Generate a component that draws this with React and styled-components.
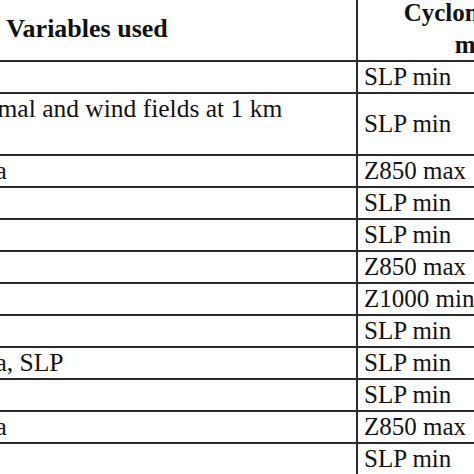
import styled, { createGlobalStyle } from 'styled-components';

const GlobalStyle = createGlobalStyle`
  html, body {
    margin: 0;
    padding: 0;
    background: #ffffff;
  }
`;

const Viewport = styled.div`
  width: 474px;
  height: 474px;
  overflow: hidden;
  background: #ffffff;
`;

const Table = styled.table`
  width: 819px;
  margin: -5px 0 0 -186px;
  border-collapse: collapse;
  table-layout: fixed;
  font-family: 'Liberation Serif', 'Times New Roman', serif;
  font-size: 25px;
  color: #111;
`;

const Col = styled.col`
  width: ${(p) => p.$width}px;
`;

const HeadCell = styled.th`
  padding: 0 0 0 ${(p) => (p.$first ? 4 : 0)}px;
  border: 2px solid #2a2a2a;
  border-left-width: ${(p) => (p.$first ? 0 : 2)}px;
  font-size: ${(p) => (p.$first ? 26 : 25)}px;
  font-weight: bold;
  line-height: 31.5px;
  text-align: center;
  vertical-align: middle;
  white-space: nowrap;
`;

const Cell = styled.td`
  padding: 0 6px 0 ${(p) => (p.$value ? 6 : 10)}px;
  border-top: 2px solid #2a2a2a;
  border-bottom: 2px solid #2a2a2a;
  border-left: ${(p) => (p.$value ? '2px solid #2a2a2a' : '0')};
  font-size: ${(p) => (p.$value ? 25 : 25.5)}px;
  line-height: 30px;
  vertical-align: ${(p) => (p.$value ? 'middle' : 'top')};
  white-space: nowrap;
`;

const rows = [
  { vars: 'SLP', method: 'SLP min' },
  {
    vars: (
      <>
        Vorticity, W, thermal and wind fields at 1 km
        <br />
        height
      </>
    ),
    method: 'SLP min',
  },
  { vars: 'Vorticity, 850 hPa', method: 'Z850 max' },
  { vars: 'SLP', method: 'SLP min' },
  { vars: 'SLP and wind', method: 'SLP min' },
  { vars: 'Geopotential', method: 'Z850 max' },
  { vars: 'Z1000 field', method: 'Z1000 min' },
  { vars: 'SLP', method: 'SLP min' },
  { vars: 'Vorticity, 850 hPa, SLP', method: 'SLP min' },
  { vars: 'SLP', method: 'SLP min' },
  { vars: 'Vorticity, 700 hPa', method: 'Z850 max' },
  { vars: 'SLP', method: 'SLP min' },
];

const App = () => {
  return (
    <Viewport>
      <GlobalStyle />
      <Table>
        <colgroup>
          <Col $width={543} />
          <Col $width={276} />
        </colgroup>
        <thead>
          <tr>
            <HeadCell $first>Variables used</HeadCell>
            <HeadCell>
              Cyclone tracking
              <br />
              method
            </HeadCell>
          </tr>
        </thead>
        <tbody>
          {rows.map((row, i) => (
            <tr key={i}>
              <Cell>{row.vars}</Cell>
              <Cell $value>{row.method}</Cell>
            </tr>
          ))}
        </tbody>
      </Table>
    </Viewport>
  );
};

export default App;
